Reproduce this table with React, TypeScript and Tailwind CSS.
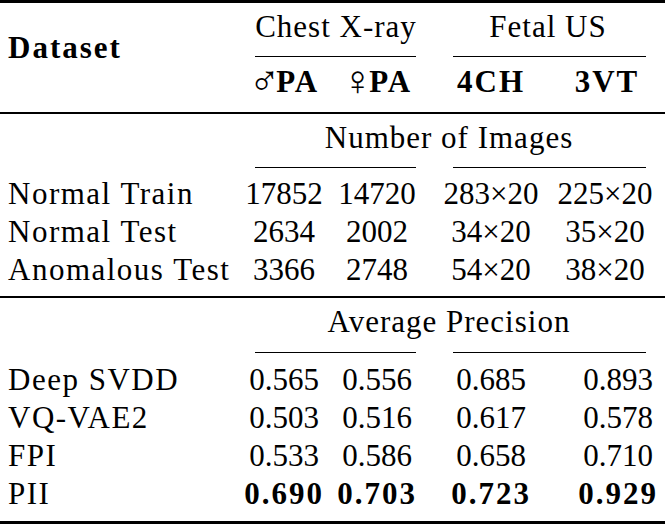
import React from "react";

const cols = "grid grid-cols-[238px_92px_94px_8px_118px_110px]";

const countRows = [
  ["Normal Train", "17852", "14720", "283×20", "225×20"],
  ["Normal Test", "2634", "2002", "34×20", "35×20"],
  ["Anomalous Test", "3366", "2748", "54×20", "38×20"],
];

const apRows = [
  ["Deep SVDD", "0.565", "0.556", "0.685", "0.893"],
  ["VQ-VAE2", "0.503", "0.516", "0.617", "0.578"],
  ["FPI", "0.533", "0.586", "0.658", "0.710"],
  ["PII", "0.690", "0.703", "0.723", "0.929"],
];

const Rule = ({ h }: { h: string }) => <div className={`${h} w-full bg-black`} />;

const CMidRules = () => (
  <div className={cols}>
    <div />
    <div className="col-span-2 ml-[17px] mr-[8px] h-px bg-black" />
    <div />
    <div className="col-span-2 ml-[21px] mr-[14px] h-px bg-black" />
  </div>
);

const SectionTitle = ({ title }: { title: string }) => (
  <div className={`${cols} h-[38px] leading-[38px]`}>
    <div />
    <div className="col-span-5 text-center tracking-[1px]">{title}</div>
  </div>
);

const Sym = ({ s }: { s: string }) => (
  <span className="font-extralight text-[42px] leading-[0] align-[-3px] mr-[-4px] font-['DejaVu_Sans',sans-serif]">
    {s}
  </span>
);

export default function App() {
  return (
    <div className="w-[665px] h-[527px] bg-white text-black text-[31px] font-['Liberation_Serif','DejaVu_Serif',serif]">
      <Rule h="h-[3px]" />

      {/* header */}
      <div className="flex">
        <div className="w-[238px] pt-[26px] pl-[8px] font-bold tracking-[2px] leading-[38px]">
          Dataset
        </div>
        <div className="flex-1">
          <div className="h-[5px]" />
          <div className="grid grid-cols-[186px_8px_228px] h-[38px] leading-[38px]">
            <div className="text-center tracking-[1px] pl-[10px]">Chest X-ray</div>
            <div />
            <div className="text-center tracking-[1px] pl-[4px]">Fetal US</div>
          </div>
          <div className="h-[10px]" />
          <div className="grid grid-cols-[186px_8px_228px]">
            <div className="ml-[17px] mr-[8px] h-px bg-black" />
            <div />
            <div className="ml-[21px] mr-[14px] h-px bg-black" />
          </div>
          <div className="h-[6px]" />
          <div className="grid grid-cols-[92px_94px_8px_118px_110px] h-[38px] leading-[38px]">
            <div className="text-center">
              <Sym s="♂" />
              <span className="font-bold tracking-[2px]">PA</span>
            </div>
            <div className="text-center">
              <Sym s="♀" />
              <span className="font-bold tracking-[2px]">PA</span>
            </div>
            <div />
            <div className="text-center font-bold tracking-[2px]">4CH</div>
            <div className="text-center font-bold tracking-[2px] pl-[4px]">3VT</div>
          </div>
        </div>
      </div>
      <div className="h-[11px]" />
      <Rule h="h-[2px]" />

      {/* number of images */}
      <div className="h-[5px]" />
      <SectionTitle title="Number of Images" />
      <div className="h-[10px]" />
      <CMidRules />
      <div className="h-[7px]" />
      {countRows.map((r) => (
        <div key={r[0]} className={`${cols} h-[38px] leading-[38px]`}>
          <div className="pl-[8px] tracking-[1.5px] whitespace-nowrap">{r[0]}</div>
          <div className="text-center">{r[1]}</div>
          <div className="text-center">{r[2]}</div>
          <div />
          <div className="text-center">{r[3]}</div>
          <div className="text-center">{r[4]}</div>
        </div>
      ))}
      <div className="h-[7px]" />
      <Rule h="h-[2px]" />

      {/* average precision */}
      <div className="h-[5px]" />
      <SectionTitle title="Average Precision" />
      <div className="h-[11px]" />
      <CMidRules />
      <div className="h-[8px]" />
      {apRows.map((r) => {
        const bold = r[0] === "PII";
        const v = bold ? "font-bold tracking-[2px]" : "";
        return (
          <div key={r[0]} className={`${cols} h-[38px] leading-[38px]`}>
            <div className="pl-[8px] tracking-[1.5px] whitespace-nowrap">{r[0]}</div>
            <div className={`text-center ${v}`}>{r[1]}</div>
            <div className={`text-center ${v}`}>{r[2]}</div>
            <div />
            <div className={`text-center ${v}`}>{r[3]}</div>
            <div className={`text-center pl-[26px] ${v}`}>{r[4]}</div>
          </div>
        );
      })}
      <div className="h-[8px]" />
      <Rule h="h-[3px]" />
    </div>
  );
}
